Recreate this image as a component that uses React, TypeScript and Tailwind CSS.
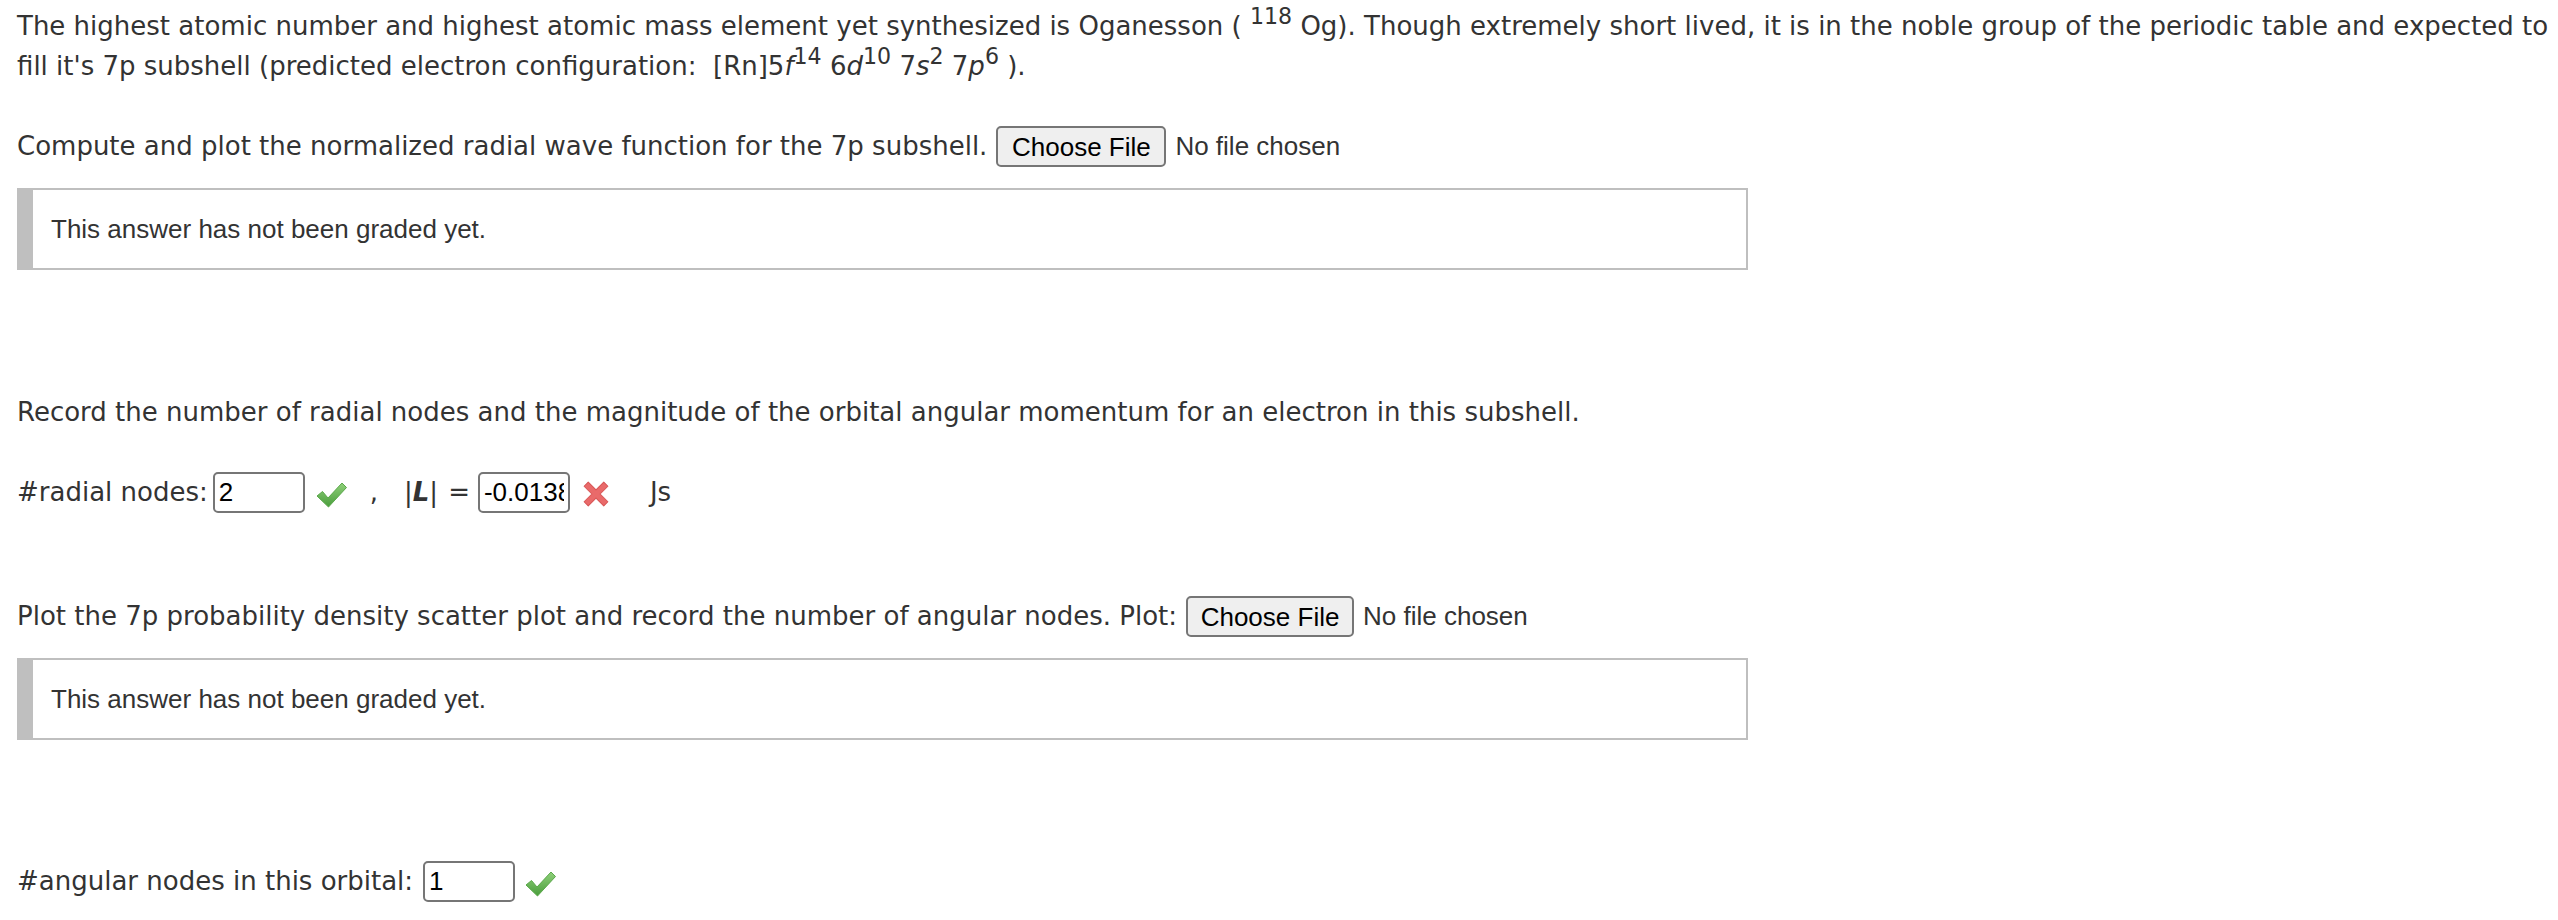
const body = "font-['DejaVu_Sans',sans-serif] text-[26px] text-[#333]";
const arial = "font-['Liberation_Sans',Arial,sans-serif]";

function FileInput({ width }: { width: string }) {
  return (
    <span className="flex items-center">
      <button
        className={`ml-[9px] h-[41px] ${width} rounded-[5px] border-2 border-[#767676] bg-[#efefef] text-[26px] text-black ${arial}`}
      >
        Choose File
      </button>
      <span className={`ml-[9px] text-[26px] text-[#333] ${arial}`}>No file chosen</span>
    </span>
  );
}

function Feedback({ className }: { className: string }) {
  return (
    <div
      className={`${className} flex h-[82px] w-[1731px] items-center border-2 border-l-[16px] border-[#bfbfbf] pl-[18px] text-[26px] text-[#333] ${arial}`}
    >
      This answer has not been graded yet.
    </div>
  );
}

function Answer({ value }: { value: string }) {
  return (
    <input
      readOnly
      value={value}
      className={`h-[41px] w-[92px] rounded-[5px] border-2 border-[#767676] bg-white px-[4px] text-[26px] text-black ${arial}`}
    />
  );
}

function Check({ className }: { className: string }) {
  return (
    <svg className={className} width="33" height="30" viewBox="0 0 33 30">
      <defs>
        <linearGradient id="ck" x1="0" y1="0" x2="0" y2="1">
          <stop offset="0" stopColor="#8fd07a" />
          <stop offset="1" stopColor="#4a9d3c" />
        </linearGradient>
      </defs>
      <path d="M2 16 L7.5 11.5 L13 18 L27 3 L31.5 7.5 L13.5 27 Z" fill="url(#ck)" stroke="#5aa84a" strokeWidth="1" strokeLinejoin="round" />
    </svg>
  );
}

function Cross({ className }: { className: string }) {
  return (
    <svg className={className} width="30" height="30" viewBox="0 0 29 29">
      <path
        d="M3 7 L7 3 L14.5 10.5 L22 3 L26 7 L18.5 14.5 L26 22 L22 26 L14.5 18.5 L7 26 L3 22 L10.5 14.5 Z"
        fill="#e96a6a"
        stroke="#d85656"
        strokeWidth="1"
        strokeLinejoin="round"
      />
    </svg>
  );
}

const sup = "text-[0.85em]";

export default function App() {
  return (
    <div className={`h-[920px] w-[2558px] overflow-hidden bg-white pl-[17px] ${body}`}>
      <div className="whitespace-nowrap pt-[6px] leading-[40px]">
        <div>
          The highest atomic number and highest atomic mass element yet synthesized is Oganesson ({" "}
          <sup className={sup}>118</sup> Og). Though extremely short lived, it is in the noble group of the periodic
          table and expected to
        </div>
        <div>
          fill it's 7p subshell (predicted electron configuration:&nbsp; [Rn]5<i>f</i>
          <sup className={sup}>14</sup> 6<i>d</i>
          <sup className={sup}>10</sup> 7<i>s</i>
          <sup className={sup}>2</sup> 7<i>p</i>
          <sup className={sup}>6</sup> ).
        </div>
      </div>

      <div className="mt-[40px] flex h-[41px] items-center whitespace-nowrap">
        <span>Compute and plot the normalized radial wave function for the 7p subshell.</span>
        <FileInput width="w-[170px]" />
      </div>

      <Feedback className="mt-[21px]" />

      <div className="mt-[127px] whitespace-nowrap leading-[30px]">
        Record the number of radial nodes and the magnitude of the orbital angular momentum for an electron in this subshell.
      </div>

      <div className="mt-[45px] flex h-[41px] items-center whitespace-nowrap">
        <span>#radial nodes:</span>
        <span className="ml-[5px]">
          <Answer value="2" />
        </span>
        <Check className="ml-[10px] mt-[4px]" />
        <span className="ml-[22px]">,</span>
        <span className="ml-[26px]">
          |<b><i>L</i></b>|
        </span>
        <span className="ml-[10px]">=</span>
        <span className="ml-[8px]">
          <Answer value="-0.01386" />
        </span>
        <Cross className="ml-[11px] mt-[2px]" />
        <span className="ml-[39px]">Js</span>
      </div>

      <div className="mt-[83px] flex h-[41px] items-center whitespace-nowrap">
        <span>Plot the 7p probability density scatter plot and record the number of angular nodes. Plot:</span>
        <FileInput width="w-[168px]" />
      </div>

      <Feedback className="mt-[21px]" />

      <div className="mt-[121px] flex h-[41px] items-center whitespace-nowrap">
        <span>#angular nodes in this orbital:</span>
        <span className="ml-[10px]">
          <Answer value="1" />
        </span>
        <Check className="ml-[9px] mt-[4px]" />
      </div>
    </div>
  );
}
